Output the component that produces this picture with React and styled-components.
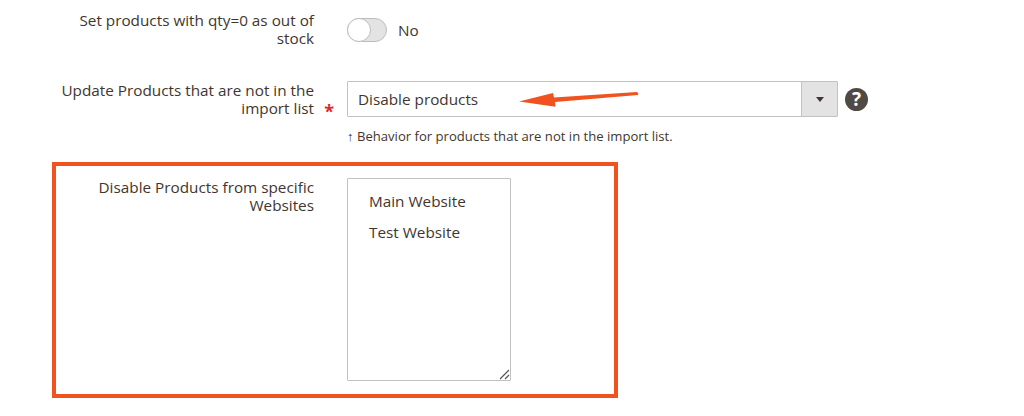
import React from 'react'
import styled, { createGlobalStyle } from 'styled-components'

const GlobalStyle = createGlobalStyle`
  html, body {
    margin: 0;
    background: #fff;
  }
  body {
    font-family: "Open Sans", "Liberation Sans", sans-serif;
    font-size: 15.3px;
    color: #41362f;
  }
`
const Page = styled.div`
  width: 1024px;
  height: 416px;
  box-sizing: border-box;
  overflow: hidden;
  padding: 11px 0 0 52px;
`
const Row = styled.div`
  display: grid;
  grid-template-columns: ${props => props.$labelWidth || 262}px 1fr;
  column-gap: 33px;
  margin-bottom: ${props => props.$gap || 0}px;
`
const Label = styled.div`
  position: relative;
  text-align: right;
  line-height: 18px;
  &::after {
    content: ${props => (props.$required ? '"*"' : 'none')};
    position: absolute;
    right: -20px;
    top: 21px;
    color: #e22626;
    font-size: 18px;
    font-weight: 700;
  }
`
const ToggleLine = styled.div`
  display: flex;
  align-items: center;
  gap: 11px;
  padding-top: 7px;
  height: 24px;
`
const Toggle = styled.div`
  width: 40px;
  height: 24px;
  box-sizing: border-box;
  border: 1px solid #bdbdbd;
  border-radius: 12px;
  background: #e3e3e3;
`
const Knob = styled.div`
  width: 24px;
  height: 24px;
  margin: -1px;
  box-sizing: border-box;
  border: 1px solid #bdbdbd;
  border-radius: 50%;
  background: #fff;
`
const Field = styled.div`
  display: flex;
  align-items: center;
  gap: 7px;
`
const SelectBox = styled.div`
  position: relative;
  display: flex;
  width: 491px;
  height: 36px;
  box-sizing: border-box;
  border: 1px solid #c2c2c2;
  border-radius: 1px;
`
const SelectText = styled.div`
  flex: 1;
  padding-left: 10px;
  line-height: 34px;
`
const SelectButton = styled.div`
  width: 36px;
  box-sizing: border-box;
  display: flex;
  align-items: center;
  justify-content: center;
  background: #e3e3e3;
  border-left: 1px solid #c2c2c2;
`
const Caret = styled.div`
  width: 0;
  height: 0;
  border-left: 4.5px solid transparent;
  border-right: 4.5px solid transparent;
  border-top: 5px solid #41362f;
`
const Help = styled.div`
  width: 23px;
  height: 23px;
  border-radius: 50%;
  background: #514943;
  color: #fff;
  font-size: 19px;
  font-weight: 700;
  line-height: 23px;
  text-align: center;
`
const Arrow = styled.svg`
  position: absolute;
  left: 170px;
  top: 8px;
`
const Note = styled.div`
  margin-top: 11px;
  font-size: 13.1px;
  line-height: 17px;
`
const Highlight = styled.div`
  width: 566px;
  height: 236px;
  box-sizing: border-box;
  border: 4px solid #f0531f;
  padding-top: 12px;
`
const MultiSelect = styled.div`
  position: relative;
  width: 164px;
  height: 203px;
  box-sizing: border-box;
  border: 1px solid #c2c2c2;
  border-radius: 1px;
  padding: 7px 21px;
`
const Option = styled.div`
  line-height: 31px;
`
const Grip = styled.svg`
  position: absolute;
  right: 0;
  bottom: 0;
`

export default function App() {
  return (
    <Page>
      <GlobalStyle />
      <Row $gap={34}>
        <Label>Set products with qty=0 as out of stock</Label>
        <ToggleLine>
          <Toggle><Knob /></Toggle>
          <span>No</span>
        </ToggleLine>
      </Row>
      <Row $gap={17}>
        <Label $required>Update Products that are not in the import list</Label>
        <div>
          <Field>
            <SelectBox>
              <SelectText>Disable products</SelectText>
              <SelectButton><Caret /></SelectButton>
              <Arrow width="122" height="18" viewBox="0 0 122 18">
                <path d="M1 11.5 L35 3 L36 7.6 L119 2 Q121 3.5 120 5 L37 12 L37.5 16.7 Z" fill="#f0531f" />
              </Arrow>
            </SelectBox>
            <Help>?</Help>
          </Field>
          <Note>↑ Behavior for products that are not in the import list.</Note>
        </div>
      </Row>
      <Highlight>
        <Row $labelWidth={258}>
          <Label>Disable Products from specific Websites</Label>
          <MultiSelect>
            <Option>Main Website</Option>
            <Option>Test Website</Option>
            <Grip width="12" height="12" viewBox="0 0 12 12">
              <path d="M2 11 L11 2 M7 11 L11 7" stroke="#555" strokeWidth="1.2" />
            </Grip>
          </MultiSelect>
        </Row>
      </Highlight>
    </Page>
  )
}
